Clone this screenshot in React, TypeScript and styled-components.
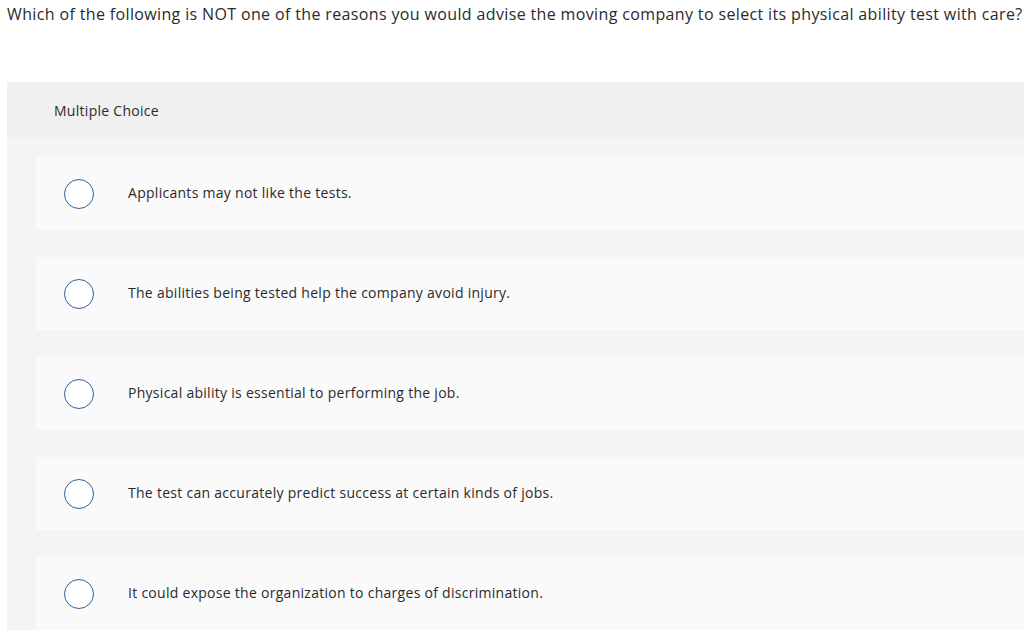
import React from 'react'
import styled, { createGlobalStyle } from 'styled-components'

const GlobalStyle = createGlobalStyle`
  html, body {
    margin: 0;
    padding: 0;
    background: #fff;
    overflow: hidden;
  }
  body {
    font-family: 'Open Sans', 'Liberation Sans', sans-serif;
    color: #333;
  }
`

const Page = styled.div`
  width: 1024px;
  height: 632px;
  overflow: hidden;
  padding-left: 7px;
  box-sizing: border-box;
`

const Question = styled.p`
  margin: 0;
  padding-top: 4px;
  font-size: 16px;
  line-height: 20px;
  letter-spacing: 0.36px;
  color: #2b2b2b;
  white-space: nowrap;
`

const Panel = styled.section`
  margin-top: 58px;
  width: 1060px;
  background: #f4f4f4;
  border-radius: 2px 0 0 0;
`

const Header = styled.div`
  height: 56px;
  background: #f0f0f0;
  display: flex;
  align-items: center;
  padding-left: 47px;
  font-size: 14px;
  letter-spacing: 0.28px;
  color: #2b2b2b;
`

const Options = styled.div`
  display: flex;
  flex-direction: column;
  gap: 27px;
  padding: 19px 0 0 29px;
`

const Option = styled.label`
  height: 73px;
  background: #fafafa;
  display: flex;
  align-items: center;
  padding-left: 28px;
  cursor: pointer;
`

const Radio = styled.span`
  width: 28px;
  height: 28px;
  border-radius: 50%;
  border: 1.5px solid #2f5f97;
  background: #fff;
  flex-shrink: 0;
`

const OptionText = styled.span`
  margin-left: 34px;
  margin-bottom: 2px;
  font-size: 14px;
  letter-spacing: 0.28px;
  color: #2b2b2b;
`

const choices = [
  'Applicants may not like the tests.',
  'The abilities being tested help the company avoid injury.',
  'Physical ability is essential to performing the job.',
  'The test can accurately predict success at certain kinds of jobs.',
  'It could expose the organization to charges of discrimination.',
]

export default function App() {
  return (
    <Page>
      <GlobalStyle />
      <Question>
        Which of the following is NOT one of the reasons you would advise the moving company to select its physical
        ability test with care?
      </Question>
      <Panel>
        <Header>Multiple Choice</Header>
        <Options>
          {choices.map((c) => (
            <Option key={c}>
              <Radio />
              <OptionText>{c}</OptionText>
            </Option>
          ))}
        </Options>
      </Panel>
    </Page>
  )
}
